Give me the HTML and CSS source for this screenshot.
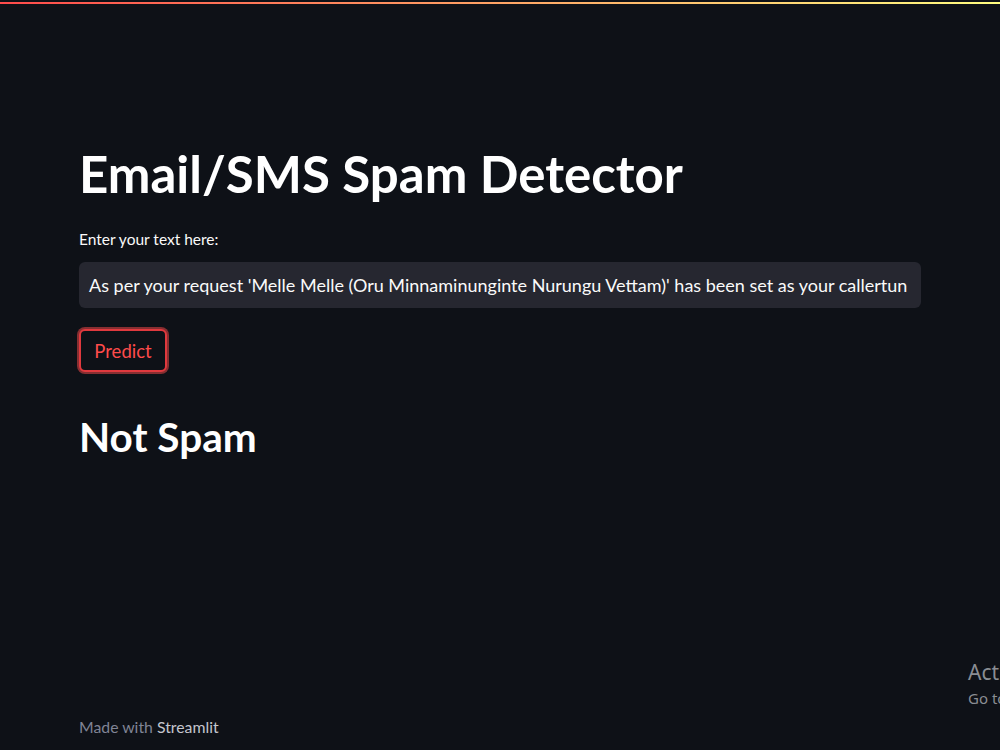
FILE: index.html
```html
<!DOCTYPE html>
<html>
<head>
<meta charset="utf-8">
<link rel="stylesheet" href="styles.css">
</head>
<body>
<div class="decoration"></div>
<main class="main">
  <h1 class="title">Email/SMS Spam Detector</h1>
  <label class="label">Enter your text here:</label>
  <div class="input">As per your request 'Melle Melle (Oru Minnaminunginte Nurungu Vettam)' has been set as your callertun</div>
  <button class="btn">Predict</button>
  <h2 class="result">Not Spam</h2>
</main>
<footer class="footer">Made with <span class="brand">Streamlit</span></footer>
<div class="watermark">
  <div class="wm1">Activate Windows</div>
  <div class="wm2">Go to Settings to activate Windows.</div>
</div>
</body>
</html>
```
FILE: styles.css
```css
html, body {
  margin: 0;
  padding: 0;
  width: 1000px;
  height: 750px;
  overflow: hidden;
  background: #0e1117;
  font-family: "Lato", "Open Sans", sans-serif;
  color: #fafafa;
}
body {
  display: flex;
  flex-direction: column;
  position: relative;
}
.decoration {
  height: 2px;
  margin-top: 2px;
  background: linear-gradient(90deg, #ff4b4b, #fffd80);
}
.main {
  padding: 140px 79px 0 79px;
  display: flex;
  flex-direction: column;
  align-items: flex-start;
  flex: 1;
}
.title {
  margin: 0;
  font-size: 51px;
  font-weight: 700;
  line-height: 60px;
  color: #ffffff;
}
.label {
  margin-top: 25px;
  font-size: 15.5px;
  color: #fafafa;
  line-height: 20px;
}
.input {
  margin-top: 13px;
  box-sizing: border-box;
  width: 842px;
  height: 46px;
  background: #262730;
  border-radius: 6px;
  padding: 0 10px;
  display: flex;
  align-items: center;
  font-size: 18px;
  white-space: nowrap;
  overflow: hidden;
  color: #fafafa;
}
.btn {
  margin-top: 21px;
  background: #0e1117;
  border: 2px solid #e0393e;
  box-shadow: 0 0 0 2px rgba(255, 75, 75, 0.5);
  border-radius: 6px;
  color: #ff4b4b;
  font-family: inherit;
  font-size: 18.5px;
  padding: 0;
  height: 43px;
  width: 88px;
}
.result {
  margin: 41px 0 0 0;
  font-size: 40.5px;
  font-weight: 700;
  line-height: 48px;
  color: #ffffff;
}
.footer {
  padding: 0 79px 14px;
  font-size: 15.8px;
  color: #808495;
}
.brand {
  color: #c4c6ce;
}
.watermark {
  position: absolute;
  left: 968px;
  top: 658px;
  white-space: nowrap;
  color: #8a8d93;
  font-family: "Noto Sans", sans-serif;
}
.wm1 {
  font-size: 21px;
  line-height: 28px;
}
.wm2 {
  font-size: 15px;
  line-height: 24px;
}
```
